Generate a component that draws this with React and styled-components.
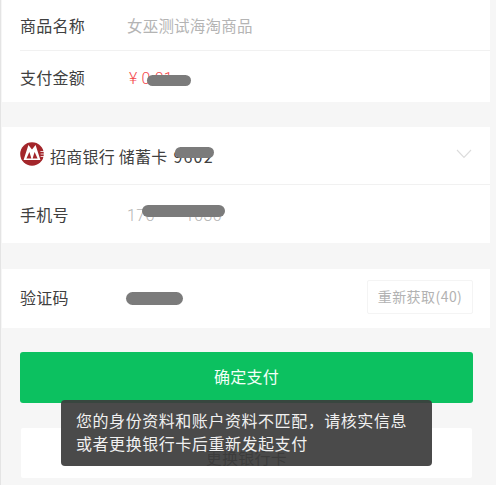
import React from 'react'
import styled, { createGlobalStyle } from 'styled-components'

const Global = createGlobalStyle`
  html, body {
    margin: 0;
    padding: 0;
    background: #f6f6f6;
  }
  * { box-sizing: border-box; }
`

const Page = styled.div`
  position: relative;
  width: 496px;
  height: 485px;
  overflow: hidden;
  padding: 0 6px 0 1px;
  background: #f6f6f6;
  border-left: 1px solid #e4e4e4;
  font-family: "Noto Sans CJK SC", "Liberation Sans", sans-serif;
  color: #404040;
`

const Panel = styled.section`
  background: #fff;
  margin-top: ${p => p.$top || 0}px;
`

const Row = styled.div`
  position: relative;
  display: flex;
  align-items: center;
  height: ${p => p.$h}px;
  padding: 0 17px ${p => p.$lift || 0}px 18px;
  &::before {
    content: '';
    display: ${p => p.$divided ? 'block' : 'none'};
    position: absolute;
    top: -1px;
    left: 18px;
    right: 0;
    height: 1px;
    background: #f1f1f1;
  }
`

const Label = styled.span`
  width: 107px;
  flex: none;
  font-size: 16px;
  letter-spacing: 0.25px;
`

const Value = styled.span`
  font-size: 15.5px;
  letter-spacing: 0.2px;
  color: #b4b4b4;
`

const Digits = styled.span`
  margin: 3px 0 0 ${p => p.$indent || 0}px;
  font-family: Roboto, "Liberation Sans", sans-serif;
  font-size: 16px;
  font-weight: 300;
  letter-spacing: ${p => p.$spacing || 0.2}px;
  color: ${p => p.$color || '#b4b4b4'};
  white-space: pre;
`

const BankName = styled.span`
  margin: -1px 0 0 6px;
  font-size: 16px;
  letter-spacing: 0.25px;
`

const BankDigits = styled.span`
  margin-left: 2px;
  letter-spacing: 1.2px;
`

const LogoMark = styled.svg`
  margin-top: -4px;
  flex: none;
`

const Chevron = styled.svg`
  margin-left: auto;
  margin-right: 1px;
  margin-top: -4px;
`

const Redact = styled.i`
  position: absolute;
  background: #7b7b7b;
  border-radius: 7px;
  left: ${p => p.$x}px;
  top: ${p => p.$y}px;
  width: ${p => p.$w}px;
  height: ${p => p.$h}px;
`

const Resend = styled.div`
  margin-left: auto;
  width: 106px;
  height: 34px;
  border: 1px solid #f4f4f4;
  border-radius: 2px;
  display: flex;
  align-items: center;
  justify-content: center;
  padding-bottom: 1px;
  font-size: 14px;
  letter-spacing: 0.45px;
  color: #b2b2b2;
`

const Actions = styled.div`
  display: flex;
  flex-direction: column;
  gap: 25px;
  padding: 24px 17px 0 18px;
`

const Primary = styled.div`
  height: 51px;
  border-radius: 3px;
  padding-bottom: 3px;
  background: #0cc160;
  color: #f2fff7;
  font-size: 16px;
  letter-spacing: 0.25px;
  display: flex;
  align-items: center;
  justify-content: center;
`

const Secondary = styled.div`
  height: 50px;
  margin: 0 1px;
  padding-top: 7px;
  background: #fff;
  border-radius: 2px;
  color: #404040;
  font-size: 16px;
  letter-spacing: 0.25px;
  display: flex;
  align-items: center;
  justify-content: center;
`

const Toast = styled.div`
  position: absolute;
  left: 60px;
  top: 400px;
  width: 371px;
  height: 66px;
  padding: 9px 15px;
  border-radius: 4px;
  background: rgba(60, 60, 60, 0.93);
  color: #f0f0f0;
  font-size: 16px;
  line-height: 23px;
  letter-spacing: 0.55px;
  white-space: nowrap;
`

function BankLogo() {
  return (
    <LogoMark width="24" height="24" viewBox="0 0 24 24">
      <circle cx="12" cy="12" r="11.8" fill="#a3262b" />
      <path d="M3.6 18 L8.4 3 L12 7.6 L15.6 3 L20.4 18 Z" fill="#fff" />
      <path d="M6.4 16.6 L9.4 10 L11.4 16.6 Z M12.6 16.6 L14.6 10 L17.6 16.6 Z" fill="#a3262b" />
      <path d="M20.4 9.5 H24 M20.6 12 H24 M20.6 14.5 H24" stroke="#fff" strokeWidth="0.8" />
    </LogoMark>
  )
}

export default function App() {
  return (
    <Page>
      <Global />
      <Panel>
        <Row $h={51} $lift={2}>
          <Label>商品名称</Label>
          <Value>女巫测试海淘商品</Value>
        </Row>
        <Row $h={51} $divided>
          <Label>支付金额</Label>
          <Digits $color="#f4484d" $indent={2}>¥ 0.01</Digits>
          <Redact $x={145} $y={24} $w={44} $h={11} />
        </Row>
      </Panel>

      <Panel $top={25}>
        <Row $h={58}>
          <BankLogo />
          <BankName>招商银行 储蓄卡 <BankDigits>9602</BankDigits></BankName>
          <Redact $x={173} $y={20} $w={39} $h={11} />
          <Chevron width="16" height="10" viewBox="0 0 16 10">
            <path d="M1 1 L8 8.5 L15 1" fill="none" stroke="#dcdcdc" strokeWidth="1.1" />
          </Chevron>
        </Row>
        <Row $h={58} $divided>
          <Label>手机号</Label>
          <Digits $spacing={0.4}>176       1030</Digits>
          <Redact $x={140} $y={20} $w={83} $h={12} />
        </Row>
      </Panel>

      <Panel $top={26}>
        <Row $h={59} $lift={4}>
          <Label>验证码</Label>
          <Redact $x={124} $y={23} $w={57} $h={13} />
          <Resend>重新获取(40)</Resend>
        </Row>
      </Panel>

      <Actions>
        <Primary>确定支付</Primary>
        <Secondary>更换银行卡</Secondary>
      </Actions>

      <Toast>
        您的身份资料和账户资料不匹配，请核实信息
        <br />
        或者更换银行卡后重新发起支付
      </Toast>
    </Page>
  )
}
